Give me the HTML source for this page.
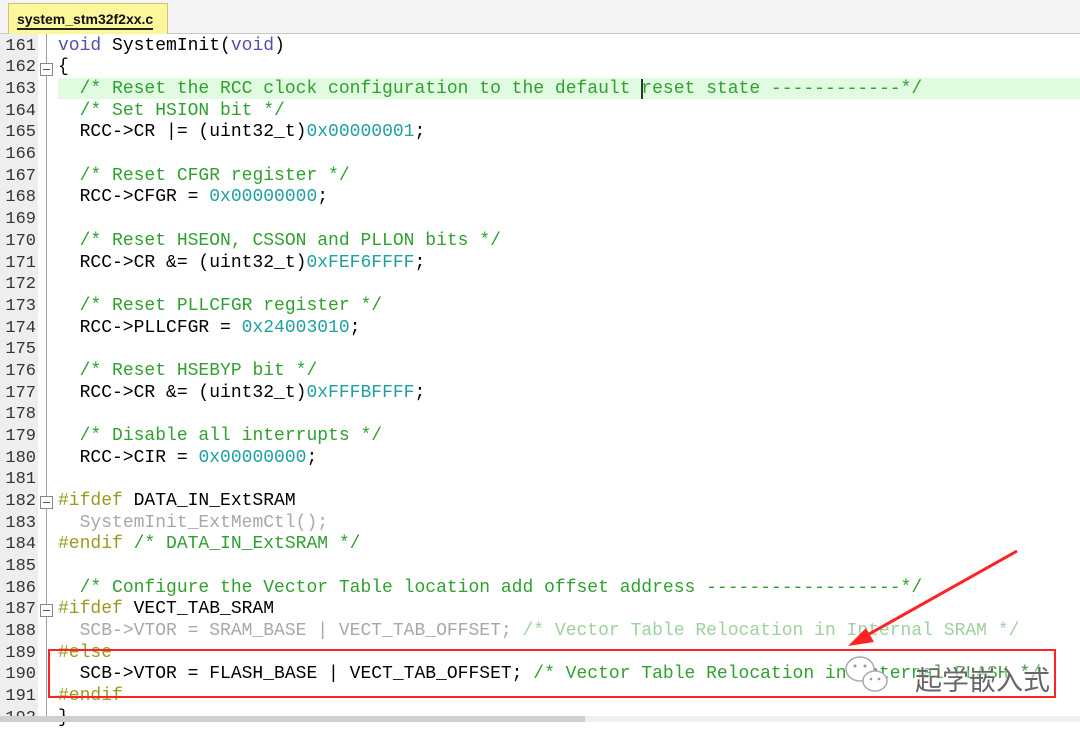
<!DOCTYPE html>
<html><head><meta charset="utf-8"><style>
html,body{margin:0;padding:0;width:1080px;height:722px;overflow:hidden;background:#fff;font-family:"Liberation Mono",monospace;}
#tabbar{position:absolute;left:0;top:0;width:1080px;height:33px;background:#f4f4f4;border-bottom:1px solid #c8c8c8;}
#tab{position:absolute;left:8px;top:3px;width:158px;height:30px;background:#fbf79a;border:1px solid #c9c27a;border-bottom:none;font-family:"Liberation Sans",sans-serif;font-size:14px;font-weight:bold;}
#tab span{position:absolute;left:8px;top:6px;border-bottom:2px solid #222;line-height:18px;color:#111}
#gut{position:absolute;left:0;top:34px;width:38px;height:684px;background:#eeeeee;}
#fold{position:absolute;left:46px;top:34px;width:1px;height:684px;background:#a0a0a0;}
.ln{position:absolute;left:0;width:36px;text-align:right;font-size:17px;color:#333;height:21.67px;line-height:21.67px}
.c{position:absolute;left:58px;font-size:18px;white-space:pre;height:21.67px;line-height:21.67px;color:#000}
.fb{position:absolute;left:40px;width:11px;height:11px;border:1px solid #888;background:#fff;}
.fb:after{content:"";position:absolute;left:2px;top:5px;width:7px;height:1px;background:#555}
.k{color:#5050b0}.cm{color:#30a030}.n{color:#20a0a0}.p{color:#9a9a20}.g{color:#a8a8a8}.gc{color:#9fd09f}
#hl{position:absolute;left:58px;top:78px;width:1022px;height:21px;background:#e0fbe0}
#sb{position:absolute;left:0;top:716px;width:1080px;height:6px;background:#f0f0f0}
#sb div{width:585px;height:6px;background:#cfcfcf}
</style></head><body>
<div id="tabbar"><div id="tab"><span>system_stm32f2xx.c</span></div></div>
<div id="gut"></div><div id="fold"></div>
<div id="hl"></div>
<div id="lines"></div>
<div style="position:absolute;left:641px;top:79px;width:2px;height:20px;background:#333"></div>
<div id="sb"><div></div></div>
<div style="position:absolute;left:48px;top:649px;width:1004px;height:45px;border:2px solid #f22;"></div>
<svg style="position:absolute;left:0;top:0" width="1080" height="722">
<line x1="1017" y1="551" x2="862" y2="638" stroke="#f22" stroke-width="3"/>
<polygon points="848,646 866,628 874,642" fill="#f22"/>
<ellipse cx="860" cy="669" rx="14" ry="12" fill="#fff" stroke="#aaa" stroke-width="1.5"/>
<ellipse cx="875" cy="681" rx="12" ry="10" fill="#fff" stroke="#aaa" stroke-width="1.5"/>
<circle cx="855" cy="666" r="1.5" fill="#999"/><circle cx="865" cy="666" r="1.5" fill="#999"/>
<circle cx="871" cy="679" r="1.3" fill="#999"/><circle cx="879" cy="679" r="1.3" fill="#999"/>
</svg>
<div style="position:absolute;left:915px;top:659px;font-family:'Liberation Sans','Noto Sans CJK SC',sans-serif;font-size:27px;color:#666;text-shadow:0 0 3px #fff,0 0 3px #fff">起学嵌入式</div>
<script>
var L=[
'<span class="k">void</span> SystemInit(<span class="k">void</span>)',
'{',
'  <span class="cm">/* Reset the RCC clock configuration to the default reset state ------------*/</span>',
'  <span class="cm">/* Set HSION bit */</span>',
'  RCC-&gt;CR |= (uint32_t)<span class="n">0x00000001</span>;',
'',
'  <span class="cm">/* Reset CFGR register */</span>',
'  RCC-&gt;CFGR = <span class="n">0x00000000</span>;',
'',
'  <span class="cm">/* Reset HSEON, CSSON and PLLON bits */</span>',
'  RCC-&gt;CR &amp;= (uint32_t)<span class="n">0xFEF6FFFF</span>;',
'',
'  <span class="cm">/* Reset PLLCFGR register */</span>',
'  RCC-&gt;PLLCFGR = <span class="n">0x24003010</span>;',
'',
'  <span class="cm">/* Reset HSEBYP bit */</span>',
'  RCC-&gt;CR &amp;= (uint32_t)<span class="n">0xFFFBFFFF</span>;',
'',
'  <span class="cm">/* Disable all interrupts */</span>',
'  RCC-&gt;CIR = <span class="n">0x00000000</span>;',
'',
'<span class="p">#ifdef</span> DATA_IN_ExtSRAM',
'  <span class="g">SystemInit_ExtMemCtl();</span>',
'<span class="p">#endif</span> <span class="cm">/* DATA_IN_ExtSRAM */</span>',
'',
'  <span class="cm">/* Configure the Vector Table location add offset address ------------------*/</span>',
'<span class="p">#ifdef</span> VECT_TAB_SRAM',
'  <span class="g">SCB-&gt;VTOR = SRAM_BASE | VECT_TAB_OFFSET;</span> <span class="gc">/* Vector Table Relocation in Internal SRAM */</span>',
'<span class="p">#else</span>',
'  SCB-&gt;VTOR = FLASH_BASE | VECT_TAB_OFFSET; <span class="cm">/* Vector Table Relocation in Internal FLASH */</span>',
'<span class="p">#endif</span>',
'}'];
var h='',lh=21.67,t0=35.8;
for(var i=0;i<L.length;i++){var y=(t0+i*lh).toFixed(2);
h+='<div class="ln" style="top:'+y+'px">'+(161+i)+'</div><div class="c" style="top:'+y+'px">'+L[i]+'</div>';}
[1,21,26].forEach(function(i){h+='<div class="fb" style="top:'+(t0+i*lh+5).toFixed(1)+'px"></div>';});
document.getElementById('lines').innerHTML=h;
</script>
</body></html>
